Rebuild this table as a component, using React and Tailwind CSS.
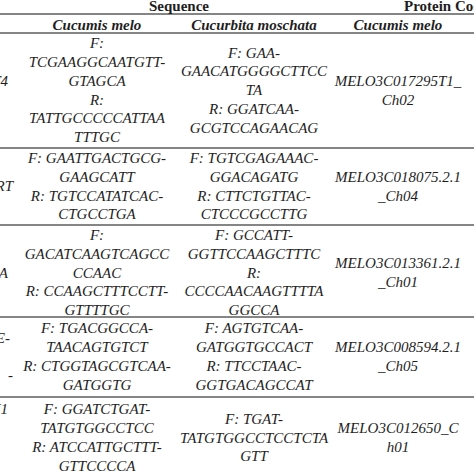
import React from "react";

const rows = [
  {
    h: "h-[115px]",
    c1: [["CmGT4", "mr-[14px]"], [" ", ""]],
    c2: ["F:", "TCGAAGGCAATGTT-", "GTAGCA", "R:", "TATTGCCCCCATTAA", "TTTGC"],
    c3: ["F: GAA-", "GAACATGGGGCTTCC", "TA", "R: GGATCAA-", "GCGTCCAGAACAG"],
    c4: ["MELO3C017295T1_", "Ch02"],
  },
  {
    h: "h-[77px]",
    c1: [["CmGRT", "mr-[9px]"]],
    c2: ["F: GAATTGACTGCG-", "GAAGCATT", "R: TGTCCATATCAC-", "CTGCCTGA"],
    c3: ["F: TGTCGAGAAAC-", "GGACAGATG", "R: CTTCTGTTAC-", "CTCCCGCCTTG"],
    c4: ["MELO3C018075.2.1", "_Ch04"],
  },
  {
    h: "h-[92px]",
    c1: [["CmLA", "mr-[14px]"]],
    c2: ["F:", "GACATCAAGTCAGCC", "CCAAC", "R: CCAAGCTTTCCTT-", "GTTTTGC"],
    c3: ["F: GCCATT-", "GGTTCCAAGCTTTC", "R:", "CCCCAACAAGTTTTA", "GGCCA"],
    c4: ["MELO3C013361.2.1", "_Ch01"],
  },
  {
    h: "h-[80px]",
    c1: [["CmSTE-", "mr-[12px]"], [" ", ""], ["-", "mr-[9px]"]],
    c2: ["F: TGACGGCCA-", "TAACAGTGTCT", "R: CTGGTAGCGTCAA-", "GATGGTG"],
    c3: ["F: AGTGTCAA-", "GATGGTGCCACT", "R: TTCCTAAC-", "GGTGACAGCCAT"],
    c4: ["MELO3C008594.2.1", "_Ch05"],
  },
  {
    h: "h-[82px]",
    c1: [["CmXTH1", "mr-[14px]"], [" ", ""], [" ", ""], [" ", ""]],
    c2: ["F: GGATCTGAT-", "TATGTGGCCTCC", "R: ATCCATTGCTTT-", "GTTCCCCA"],
    c3: ["F: TGAT-", "TATGTGGCCTCCTCTA", "GTT"],
    c4: ["MELO3C012650_C", "h01"],
  },
];

function Lines({ items }) {
  return (
    <div className="flex flex-col items-center text-center leading-[18.8px] whitespace-nowrap">
      {items.map((t, i) => (
        <span key={i}>{t}</span>
      ))}
    </div>
  );
}

export default function App() {
  return (
    <div className="w-[474px] h-[474px] overflow-hidden bg-white text-[#1e1e1e] font-['Liberation_Serif',serif] text-[15px]">
      {/* Header row 1 */}
      <div className="grid grid-cols-[22px_150px_164px_124px_14px] h-[15px] border-b-2 border-[#858585] leading-[13px]">
        <div />
        <div className="col-span-2 text-center font-bold">Sequence</div>
        <div className="col-span-2 pl-[68px] font-bold whitespace-nowrap overflow-visible">Protein Coding Sequence</div>
      </div>
      {/* Header row 2 */}
      <div className="grid grid-cols-[22px_150px_164px_124px_14px] h-[19px] border-b-2 border-[#858585] leading-[15px] pt-[3px] font-bold italic">
        <div />
        <div className="text-center whitespace-nowrap">Cucumis melo</div>
        <div className="text-center whitespace-nowrap">Cucurbita moschata</div>
        <div className="text-center whitespace-nowrap">Cucumis melo</div>
        <div />
      </div>
      {rows.map((r, i) => (
        <div
          key={i}
          className={`grid grid-cols-[22px_150px_164px_124px_14px] ${r.h} border-b-2 border-[#858585] italic`}
        >
          <div className="flex flex-col items-end justify-center overflow-hidden leading-[18.8px] whitespace-nowrap">
            {r.c1.map(([t, m], j) => (
              <span key={j} className={m}>
                {t === " " ? "\u00a0" : t}
              </span>
            ))}
          </div>
          <div className="flex items-center justify-center">
            <Lines items={r.c2} />
          </div>
          <div className="flex items-center justify-center">
            <Lines items={r.c3} />
          </div>
          <div className="flex items-center justify-center">
            <Lines items={r.c4} />
          </div>
          <div />
        </div>
      ))}
    </div>
  );
}
